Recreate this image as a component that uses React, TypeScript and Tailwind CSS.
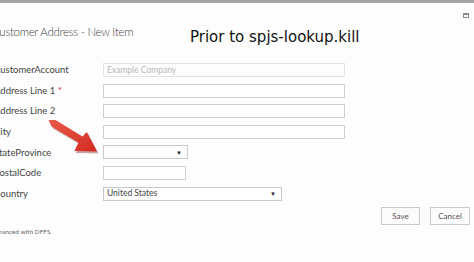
import React from "react";

const ROWS = [
  { label: "CustomerAccount", kind: "readonly", width: "w-[242px]" },
  { label: "Address Line 1", kind: "text", width: "w-[242px]", required: true },
  { label: "Address Line 2", kind: "text", width: "w-[242px]" },
  { label: "City", kind: "text", width: "w-[242px]" },
  { label: "StateProvince", kind: "select", width: "w-[85px]", value: "" },
  { label: "PostalCode", kind: "text", width: "w-[83px]" },
  { label: "Country", kind: "select", width: "w-[179px]", value: "United States" },
];

const Field = ({ row }: { row: (typeof ROWS)[number] }) => {
  if (row.kind === "readonly") {
    return (
      <div className={`${row.width} h-[14px] border border-[#e3e3e3] bg-[#fdfdfd] flex items-center px-[3px] text-[8.5px] text-[#b8b8b8]`}>
        Example Company
      </div>
    );
  }
  if (row.kind === "select") {
    return (
      <div className={`${row.width} h-[14px] border border-[#c8c8c8] bg-white flex items-center justify-between px-[3px] text-[8.5px] text-[#444]`}>
        <span>{row.value}</span>
        <span className="text-[6px] text-[#222] pr-[2px]">▼</span>
      </div>
    );
  }
  return <div className={`${row.width} h-[14px] border border-[#cfcfcf] bg-white`} />;
};

export default function App() {
  return (
    <div className="relative w-[474px] h-[262px] overflow-hidden bg-[#fdfdfd] font-['Lato','Open_Sans',sans-serif]">
      <div className="h-[3px] bg-[#a3a3a3]" />

      {/* maximize glyph */}
      <div className="absolute left-[463px] top-[13px] w-[6px] h-[5px] border border-[#8a8a8a] border-t-2" />

      <div className="flex items-start ml-[-8px] mt-[23px] h-[21px]">
        <div className="text-[11.5px] tracking-[-0.3px] font-light text-[#444] w-[198px] leading-none">Customer Address - New Item</div>
        <div className="mt-[4px] text-[15px] text-[#111] font-['DejaVu_Sans',sans-serif] leading-none">Prior to spjs-lookup.kill</div>
      </div>

      <div className="flex flex-col gap-[6.6px] mt-[16px] ml-[-6px]">
        {ROWS.map((row) => (
          <div key={row.label} className="flex items-center h-[14px]">
            <div className="w-[109px] text-[9.5px] text-[#444] leading-none">
              {row.label}
              {row.required && <span className="text-[#c33]"> *</span>}
            </div>
            <Field row={row} />
          </div>
        ))}
      </div>

      <div className="flex justify-end gap-[10px] pr-[4px] mt-[6px]">
        <div className="w-[39px] h-[18px] border border-[#cacaca] bg-[#fbfbfb] flex items-center justify-center text-[8px] text-[#555]">Save</div>
        <div className="w-[40px] h-[18px] border border-[#cacaca] bg-[#fbfbfb] flex items-center justify-center text-[8px] text-[#555]">Cancel</div>
      </div>

      <div className="ml-[-9px] mt-[4px] text-[6.5px] text-[#666] leading-none">Enhanced with DFFS</div>

      {/* red callout arrow */}
      <svg className="absolute left-0 top-0" width="474" height="262" viewBox="0 0 474 262">
        <defs>
          <linearGradient id="ar" x1="0" y1="0" x2="1" y2="1">
            <stop offset="0" stopColor="#e85a4a" />
            <stop offset="1" stopColor="#d42a20" />
          </linearGradient>
        </defs>
        <g opacity="0.35" transform="translate(1.5,2)" fill="#600">
          <path d="M48.5 120 L51.5 126.5 L78.5 142.5 L74.4 151.1 L97 151.5 L86.8 132.1 L82.5 136.5 L55.5 120 Z" />
        </g>
        <path d="M48.5 120 L51.5 126.5 L78.5 142.5 L74.4 151.1 L97 151.5 L86.8 132.1 L82.5 136.5 L55.5 120 Z" fill="url(#ar)" />
      </svg>
    </div>
  );
}
